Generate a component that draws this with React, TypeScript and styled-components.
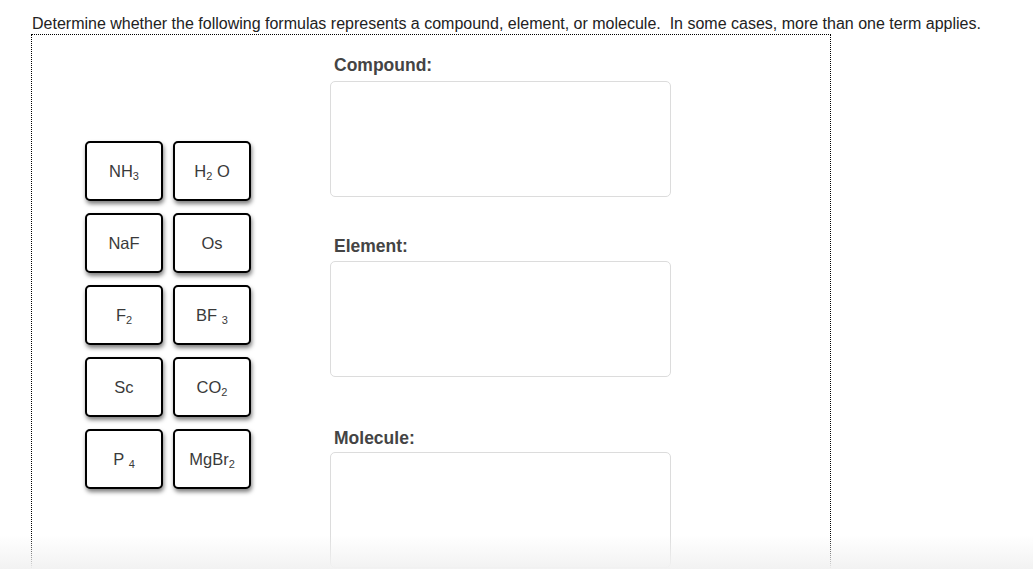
import styled, { createGlobalStyle } from 'styled-components'

const GlobalStyle = createGlobalStyle`
    html, body {
        margin: 0;
        padding: 0;
        background: #fff;
        font-family: 'Liberation Sans', Arial, sans-serif;
    }
`

const Page = styled.div`
    width: 1033px;
    height: 569px;
    overflow: hidden;
    position: relative;
`

const Question = styled.p`
    margin: 15px 0 1px 32px;
    font-size: 16px;
    line-height: 18px;
    color: #222;
    white-space: pre;
`

const DropArea = styled.div`
    margin-left: 31px;
    width: 800px;
    height: 600px;
    box-sizing: border-box;
    border: 1px dotted #000;
    display: flex;
`

const TileGrid = styled.div`
    display: grid;
    grid-template-columns: repeat(2, 78px);
    grid-auto-rows: 60px;
    column-gap: 10px;
    row-gap: 12px;
    padding: 106px 0 0 53px;
    align-content: start;
`

const Tile = styled.div`
    box-sizing: border-box;
    border: 2px solid #000;
    border-radius: 5px;
    background: #fff;
    box-shadow: 1px 3px 4px rgba(0, 0, 0, 0.5);
    display: flex;
    align-items: center;
    justify-content: center;
    font-size: 16.5px;
    color: #3a3a3a;
`

const Sub = styled.sub`
    font-size: 11px;
    vertical-align: -3px;
    line-height: 0;
`

const Targets = styled.div`
    display: flex;
    flex-direction: column;
    margin-left: 79px;
    padding-top: 21px;
`

const Label = styled.div<{ $gap: number }>`
    margin: ${(p) => p.$gap}px 0 0 4px;
    font-size: 17.5px;
    line-height: 18px;
    font-weight: bold;
    color: #444;
`

const Box = styled.div<{ $gap: number }>`
    margin-top: ${(p) => p.$gap}px;
    width: 341px;
    height: 116px;
    box-sizing: border-box;
    border: 1px solid #dcdcdc;
    border-radius: 5px;
    background: #fff;
`

const BottomFade = styled.div`
    position: absolute;
    left: 0;
    right: 0;
    bottom: 0;
    height: 34px;
    background: linear-gradient(to bottom, rgba(242, 242, 242, 0), rgba(242, 242, 242, 1));
    pointer-events: none;
`

const tiles: [string, string?, string?][] = [
    ['NH', '3'],
    ['H', '2', '\u00a0O'],
    ['NaF'],
    ['Os'],
    ['F', '2'],
    ['BF\u00a0', '3'],
    ['Sc'],
    ['CO', '2'],
    ['P\u00a0', '4'],
    ['MgBr', '2'],
]

const sections: [string, number, number][] = [
    ['Compound:', 0, 7],
    ['Element:', 40, 6],
    ['Molecule:', 52, 5],
]

export default function App() {
    return (
        <Page>
            <GlobalStyle />
            <Question>
                Determine whether the following formulas represents a compound, element, or molecule.  In some cases, more than one term applies.
            </Question>
            <DropArea>
                <TileGrid>
                    {tiles.map(([base, sub, rest], i) => (
                        <Tile key={i}>
                            <span>
                                {base}
                                {sub && <Sub>{sub}</Sub>}
                                {rest}
                            </span>
                        </Tile>
                    ))}
                </TileGrid>
                <Targets>
                    {sections.map(([name, labelGap, boxGap]) => (
                        <div key={name}>
                            <Label $gap={labelGap}>{name}</Label>
                            <Box $gap={boxGap} />
                        </div>
                    ))}
                </Targets>
            </DropArea>
            <BottomFade />
        </Page>
    )
}
